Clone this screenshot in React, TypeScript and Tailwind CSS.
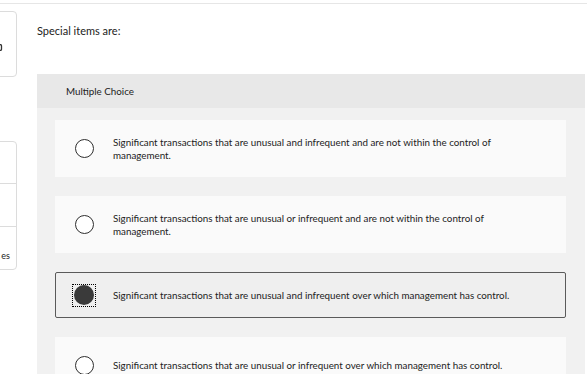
import React from "react";

const options = [
  {
    text: "Significant transactions that are unusual and infrequent and are not within the control of management.",
    selected: false,
  },
  {
    text: "Significant transactions that are unusual or infrequent and are not within the control of management.",
    selected: false,
  },
  {
    text: "Significant transactions that are unusual and infrequent over which management has control.",
    selected: true,
  },
  {
    text: "Significant transactions that are unusual or infrequent over which management has control.",
    selected: false,
  },
];

function Radio({ selected }: { selected: boolean }) {
  if (selected) {
    return (
      <div className="w-[24px] h-[23px] shrink-0 flex items-center justify-center border border-dotted border-black">
        <div className="w-[20px] h-[20px] rounded-full bg-[#3a3a3a]" />
      </div>
    );
  }
  return (
    <div className="w-[24px] h-[23px] shrink-0 flex items-center justify-center">
      <div className="w-[19px] h-[19px] rounded-full border-[1.5px] border-[#2e2e2e] bg-white" />
    </div>
  );
}

export default function App() {
  return (
    <div
      className="w-[587px] h-[374px] bg-white overflow-hidden text-[#222]"
      style={{ fontFamily: "Lato, 'Open Sans', Arial, sans-serif" }}
    >
      <div className="h-[3px]" />
      <div className="border-t border-[#e6e6e6] flex">
        {/* sidebar */}
        <div className="w-[17px] shrink-0 flex flex-col">
          <div className="-ml-[30px] mt-[7px] h-[66px] w-[47px] border border-[#dcdcdc] rounded-[4px] flex items-center justify-end pr-[13px]">
            <svg width="5" height="7" viewBox="0 0 5 7" className="mt-[6px]">
              <path d="M0 0.5 H2.2 Q3.5 0.5 3.5 2 V5 Q3.5 6.5 2.2 6.5 H0" fill="none" stroke="#333" strokeWidth="1.3" />
            </svg>
          </div>
          <div className="-ml-[30px] mt-[64px] w-[47px] border border-[#dcdcdc] rounded-[4px] flex flex-col">
            <div className="h-[42px] border-b border-[#dcdcdc]" />
            <div className="h-[43px] border-b border-[#dcdcdc]" />
            <div className="h-[42px] flex items-end justify-end pr-[6px] pb-[9px]">
              <span className="text-[9px] leading-none">es</span>
            </div>
          </div>
        </div>
        {/* main */}
        <div className="flex-1 pl-[20px] pr-[2px]">
          <div className="pt-[20px] h-[70px] text-[11px] leading-[14px] text-[#222]">
            Special items are:
          </div>
          <div className="bg-[#f1f1f1]">
            <div className="bg-[#e8e8e8] h-[34px] flex items-center pl-[29px] text-[9.8px] text-[#222]">
              Multiple Choice
            </div>
            <div className="flex flex-col gap-[19px] pt-[12px] pl-[18px] pr-[19px] pb-[20px]">
              {options.map((o, i) => (
                <div
                  key={i}
                  className={
                    o.selected
                      ? "flex items-center h-[46px] pl-[16px] pr-[20px] rounded-[2px] border border-[#5a5a5a] bg-[#efefef]"
                      : "flex items-center h-[57px] pl-[17px] pr-[20px] bg-[#fafafa]"
                  }
                >
                  <Radio selected={o.selected} />
                  <div className="pl-[17px] text-[9.8px] leading-[13px] text-[#222] max-w-[430px]">
                    {o.text}
                  </div>
                </div>
              ))}
            </div>
          </div>
        </div>
      </div>
    </div>
  );
}
